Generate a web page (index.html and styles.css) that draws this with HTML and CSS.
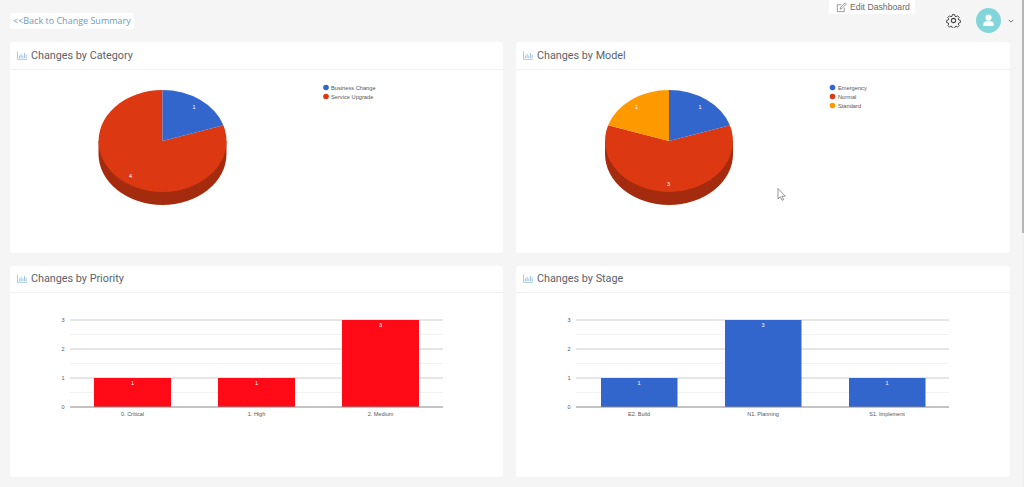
FILE: index.html
```html
<!DOCTYPE html>
<html lang="en">
<head>
<meta charset="utf-8">
<title>Change Dashboard</title>
<link rel="stylesheet" href="styles.css">
</head>
<body>
<div class="scrollbar"><div class="thumb"></div></div>
<a class="edit-btn"><svg class="edit-icon" viewBox="0 0 12 12"><path d="M9 6.5V10.5H1.5V3H6"/><path d="M4.5 7.8L5 5.8L10 .9L11.3 2.2L6.4 7.2Z"/></svg>Edit Dashboard</a>
<header class="topbar">
  <a class="back-btn">&lt;&lt;Back to Change Summary</a>
  <div class="top-actions">
    <svg class="gear" viewBox="0 0 24 24"><circle cx="12" cy="12" r="3.4"/><path d="M10 1.5h4l.7 3 1.9.8 2.6-1.6 2.8 2.8-1.6 2.6.8 1.9 3 .7v4l-3 .7-.8 1.9 1.6 2.6-2.8 2.8-2.6-1.6-1.9.8-.7 3h-4l-.7-3-1.9-.8-2.6 1.6-2.8-2.8 1.6-2.6-.8-1.9-3-.7v-4l3-.7.8-1.9-1.6-2.6 2.8-2.8 2.6 1.6 1.9-.8z" transform="translate(1.2 1.2) scale(.9)"/></svg>
    <div class="avatar"><svg viewBox="0 0 24 24"><circle cx="12" cy="8.3" r="3.9"/><path d="M5.500 19v-2.500c0-2.200 1.800-3.500 4-3.500h5c2.200 0 4 1.300 4 3.500V19z"/></svg></div>
    <svg class="chev" viewBox="0 0 8 5"><path d="M1 1l3 3 3-3"/></svg>
  </div>
</header>
<main class="grid">
  <section class="card">
    <h2 class="card-title"><svg class="chart-icon" viewBox="0 0 12 10"><path class="axis" d="M.5 0V9.500H12"/><path d="M3 8V5M5 8V3M7 8V5M9 8V2M11 8V4"/></svg>Changes by Category</h2>
    <svg class="chart" viewBox="0 0 493 183.500">
      <path class="side-red" d="M88.500 71v13a64 51 0 0 0 128 0V71z"/>
      <path class="red" d="M152.500 71L213.400 55.200A64 51 0 1 1 152.500 20Z"/>
      <path class="blue" d="M152.500 71V20A64 51 0 0 1 213.400 55.200Z"/>
      <text class="val" x="184" y="39">1</text>
      <text class="val" x="120.500" y="107.500">4</text>
      <circle class="blue" cx="316" cy="17.500" r="2.800"/><text class="leg" x="321" y="19.500">Business Change</text>
      <circle class="red" cx="316" cy="26.500" r="2.800"/><text class="leg" x="321" y="28.500">Service Upgrade</text>
    </svg>
  </section>
  <section class="card">
    <h2 class="card-title"><svg class="chart-icon" viewBox="0 0 12 10"><path class="axis" d="M.5 0V9.500H12"/><path d="M3 8V5M5 8V3M7 8V5M9 8V2M11 8V4"/></svg>Changes by Model</h2>
    <svg class="chart" viewBox="0 0 494 183.500">
      <path class="side-red" d="M89 71v13a64 51 0 0 0 128 0V71z"/>
      <path class="red" d="M153 71L213.900 55.200A64 51 0 1 1 92.100 55.200Z"/>
      <path class="blue" d="M153 71V20A64 51 0 0 1 213.900 55.200Z"/>
      <path class="orange" d="M153 71L92.100 55.200A64 51 0 0 1 153 20Z"/>
      <text class="val" x="184" y="39">1</text>
      <text class="val" x="120.500" y="39">1</text>
      <text class="val" x="152.500" y="116">3</text>
      <circle class="blue" cx="316.500" cy="17.500" r="2.800"/><text class="leg" x="322" y="19.500">Emergency</text>
      <circle class="red" cx="316.500" cy="26.500" r="2.800"/><text class="leg" x="322" y="28.500">Normal</text>
      <circle class="orange" cx="316.500" cy="35.500" r="2.800"/><text class="leg" x="322" y="37.500">Standard</text>
      <path class="pointer" d="M262 118.500V129L264.400 126.700L266 130.300L267.600 129.600L266 126.200H269.300Z"/>
    </svg>
  </section>
  <section class="card">
    <h2 class="card-title"><svg class="chart-icon" viewBox="0 0 12 10"><path class="axis" d="M.5 0V9.500H12"/><path d="M3 8V5M5 8V3M7 8V5M9 8V2M11 8V4"/></svg>Changes by Priority</h2>
    <svg class="chart" viewBox="0 0 493 183.500">
      <path class="minor" d="M60 41.500H433M60 70.500H433M60 99.500H433"/>
      <path class="major" d="M60 27H433M60 56H433M60 85H433"/>
      <rect class="bar-red" x="84" y="85" width="77" height="29"/>
      <rect class="bar-red" x="208" y="85" width="77" height="29"/>
      <rect class="bar-red" x="332" y="27" width="77" height="87"/>
      <path class="base" d="M60 114H433"/>
      <text class="tick" x="54.500" y="29">3</text><text class="tick" x="54.500" y="58">2</text><text class="tick" x="54.500" y="87">1</text><text class="tick" x="54.500" y="116">0</text>
      <text class="val" x="122.500" y="91.500">1</text><text class="val" x="246.500" y="91.500">1</text><text class="val" x="370.500" y="33.500">3</text>
      <text class="cat" x="122.500" y="123">0. Critical</text><text class="cat" x="246.500" y="123">1. High</text><text class="cat" x="370.500" y="123">2. Medium</text>
    </svg>
  </section>
  <section class="card">
    <h2 class="card-title"><svg class="chart-icon" viewBox="0 0 12 10"><path class="axis" d="M.5 0V9.500H12"/><path d="M3 8V5M5 8V3M7 8V5M9 8V2M11 8V4"/></svg>Changes by Stage</h2>
    <svg class="chart" viewBox="0 0 494 183.500">
      <path class="minor" d="M60 41.500H433M60 70.500H433M60 99.500H433"/>
      <path class="major" d="M60 27H433M60 56H433M60 85H433"/>
      <rect class="bar-blue" x="85" y="85" width="76.500" height="29"/>
      <rect class="bar-blue" x="209" y="27" width="76.500" height="87"/>
      <rect class="bar-blue" x="333" y="85" width="76.500" height="29"/>
      <path class="base" d="M60 114H433"/>
      <text class="tick" x="54.500" y="29">3</text><text class="tick" x="54.500" y="58">2</text><text class="tick" x="54.500" y="87">1</text><text class="tick" x="54.500" y="116">0</text>
      <text class="val" x="123" y="91.500">1</text><text class="val" x="247" y="33.500">3</text><text class="val" x="371" y="91.500">1</text>
      <text class="cat" x="123" y="123">E2. Build</text><text class="cat" x="247" y="123">N1. Planning</text><text class="cat" x="371" y="123">S1. Implement</text>
    </svg>
  </section>
</main>
</body>
</html>
```
FILE: styles.css
```css
* { box-sizing: border-box; }
html, body { margin: 0; height: 487px; overflow: hidden; }
body { background: #f5f5f5; font-family: "Liberation Sans", Arial, sans-serif; padding: 13px 10px 0 10px; position: relative; }
.topbar { display: flex; justify-content: space-between; align-items: flex-start; height: 29px; }
.back-btn { display: block; height: 16px; width: 124px; background: #fff; border-radius: 3px; padding-left: 3px; font-family: "Open Sans", sans-serif; font-size: 9px; line-height: 16px; color: #6b9cbd; white-space: nowrap; }
.edit-btn { position: absolute; left: 829px; top: 0; width: 86px; height: 14px; background: #fff; border-radius: 0 0 3px 3px; display: flex; align-items: center; padding-left: 7px; font-size: 8.700px; color: #6a6a6a; gap: 3px; }
.edit-icon { width: 11px; height: 11px; fill: none; stroke: #777; stroke-width: .8; }
.top-actions { display: flex; align-items: center; margin-top: -5px; }
.gear { width: 15px; height: 15px; fill: none; stroke: #444; stroke-width: 1.700; stroke-linejoin: round; margin-right: 15px; }
.avatar { width: 25px; height: 25px; border-radius: 50%; background: #82d6db; display: flex; align-items: center; justify-content: center; margin-right: 7px; }
.avatar svg { width: 19px; height: 19px; fill: #fff; }
.chev { width: 6px; height: 4px; fill: none; stroke: #555; stroke-width: 1.100; }
.grid { display: grid; grid-template-columns: 493px 494px; grid-template-rows: 211px 211px; column-gap: 13px; row-gap: 12.500px; }
.card { background: #fff; border-radius: 3px; overflow: hidden; }
.card-title { margin: 0; height: 27.500px; border-bottom: 1px solid #f0f0f0; display: flex; align-items: center; gap: 4px; padding-left: 7px; font-family: "Roboto", sans-serif; font-size: 10.800px; font-weight: 400; color: #5a5f69; }
.chart-icon { width: 10px; height: 9px; fill: none; stroke: #7fb2d8; stroke-width: .9; flex: none; }
.chart { display: block; width: 100%; height: 183.500px; }
.blue { fill: #3366cc; }
.red { fill: #dc3912; }
.orange { fill: #ff9900; }
.side-red { fill: #a52b0e; }
.val { font-size: 5.500px; fill: #fff; text-anchor: middle; }
.leg { font-size: 5.700px; fill: #555; }
.tick { font-size: 5.500px; fill: #555; text-anchor: end; }
.cat { font-size: 5.500px; fill: #555; text-anchor: middle; }
.minor { stroke: #f2f2f2; stroke-width: 1; fill: none; }
.major { stroke: #ccc; stroke-width: 1; fill: none; }
.base { stroke: #888; stroke-width: 1; fill: none; }
.bar-red { fill: #ff0a16; }
.bar-blue { fill: #3366cc; }
.pointer { fill: #fff; stroke: #555; stroke-width: .6; }
.scrollbar { position: absolute; top: 0; right: 0; width: 2px; height: 487px; background: #f1f1f1; }
.thumb { height: 233px; background: #b5b5b5; }
```
